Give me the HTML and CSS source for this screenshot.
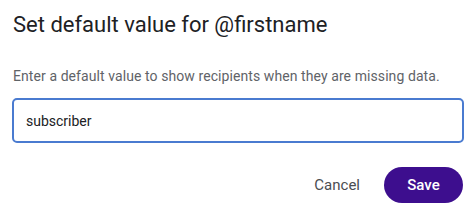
FILE: index.html
```html
<!DOCTYPE html>
<html lang="en">
  <head>
    <meta charset="UTF-8" />
    <meta name="viewport" content="width=device-width, initial-scale=1.0" />
    <title>Set default value</title>
    <link rel="stylesheet" href="styles.css">
  </head>
  <body>
    <div class="dialog">
      <!-- header -->
      <h2 class="title">Set default value for @firstname</h2>
      <p class="hint">Enter a default value to show recipients when they are missing data.</p>
      <!-- field -->
      <div class="field">subscriber</div>
      <!-- actions -->
      <div class="actions">
        <button class="cancel">Cancel</button>
        <button class="save">Save</button>
      </div>
    </div>
  </body>
</html>
```

FILE: styles.css
```css
body {
  margin: 0;
  background-color: #fff;
  font-family: Roboto, "Liberation Sans", Arial, sans-serif;
}

.dialog {
  width: 474px;
  height: 214px;
  padding: 11px 10px 0 12px;
  box-sizing: border-box;
}

.title {
  margin: 0 0 0 1px;
  font-size: 22px;
  font-weight: 400;
  color: #202124;
  line-height: 28px;
}

.hint {
  margin: 28px 0 0 1px;
  font-size: 14px;
  letter-spacing: 0.08px;
  color: #5f6368;
  line-height: 18px;
}

.field {
  margin-top: 13px;
  height: 45px;
  border: 2px solid #4a7bd0;
  border-radius: 5px;
  box-sizing: border-box;
  padding: 0 12px;
  display: flex;
  align-items: center;
  font-size: 14px;
  color: #202124;
}

.actions {
  display: flex;
  justify-content: flex-end;
  align-items: center;
  gap: 24px;
  margin-top: 24px;
}

button {
  font-family: inherit;
  font-size: 15px;
  border: none;
  cursor: pointer;
}

.cancel {
  background: none;
  color: #4a4d52;
  font-weight: 400;
  padding: 0;
}

.save {
  background-color: #3d0e8e;
  color: #fff;
  font-weight: 500;
  width: 79px;
  height: 36px;
  border-radius: 18px;
  margin-right: 1px;
}
```
